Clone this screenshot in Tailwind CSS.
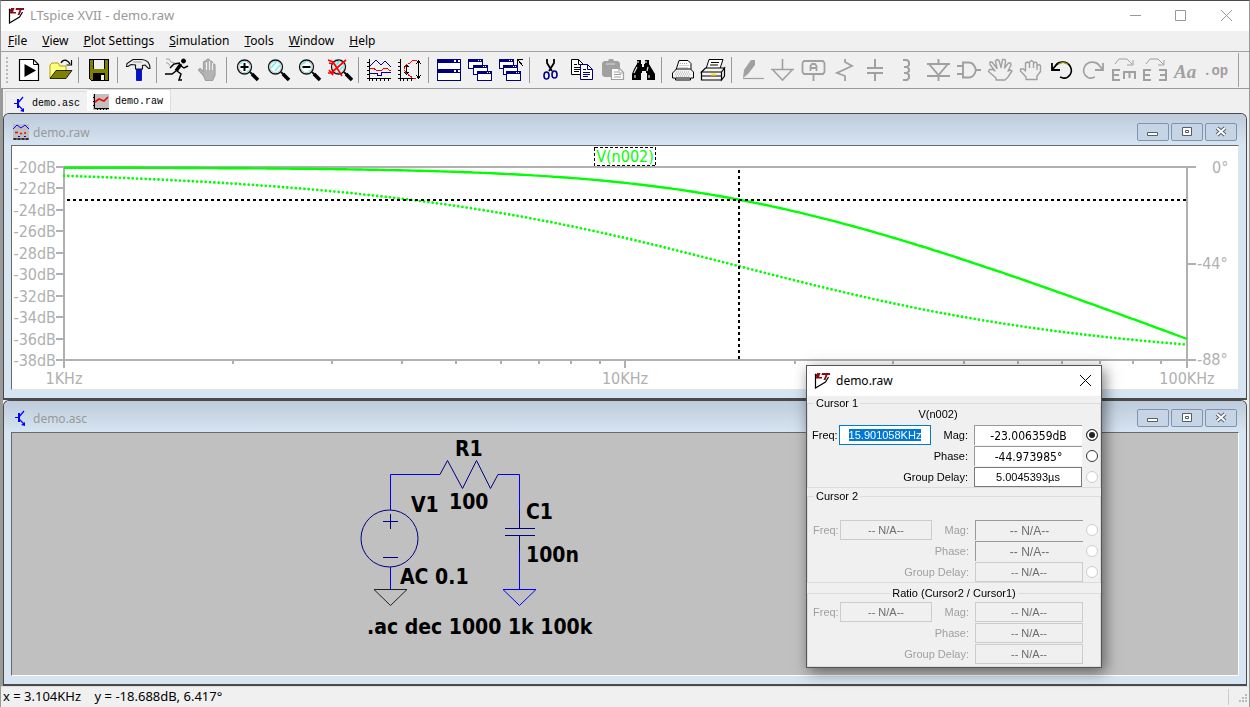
<!DOCTYPE html>
<html lang="en">
<head>
    <meta charset="UTF-8">
    <meta name="viewport" content="width=device-width, initial-scale=1.0">
    <title>LTspice XVII - demo.raw</title>
    <script src="https://cdn.jsdelivr.net/npm/@tailwindcss/browser@4"></script>
</head>
<body class="h-screen flex flex-col overflow-hidden bg-[#f0f0f0] border-l border-r border-[#999] border-t border-t-[#4a4a4a] font-['Noto_Sans',sans-serif] text-[12px] text-black">

    <!-- shared symbols -->
    <svg class="hidden">
        <symbol id="logo" viewBox="0 0 16 16">
            <path d="M1.500 1v14l10-6l3-5M1 1l4 3" fill="none" stroke="#000" stroke-width="1.200"/>
            <path d="M3 0h3.500L5 4h3v1.500H1.500L2 4zM8 0h8v2h-2.500L11.500 7H9.500l2-5H7.500z" fill="#8b0a14"/>
        </symbol>
        <symbol id="npn" viewBox="0 0 16 16">
            <path d="M2 7.500h3M6 7l5-6M6 9l5 5" fill="none" stroke="#00f" stroke-width="1.200"/>
            <path d="M5 3h2v9H5zM12 16v-4l-4 3z" fill="#00f"/>
        </symbol>
        <symbol id="wave" viewBox="0 0 16 16">
            <path d="M0 0h16v16H0z" fill="#c0c0c0"/>
            <path d="M0 5l4-4l4 3l4-3l4 4" fill="none" stroke="#00f"/>
            <path d="M2 8.500h3M7 9.500h2M11 9h2" stroke="#f00" stroke-width="1.500"/>
            <path d="M5 12.500h2M11 12.500h2" stroke="#00f"/>
            <path d="M0 15h16M2 14v2M6 14v2M10 14v2M14 14v2" stroke="#000"/>
        </symbol>
        <symbol id="lens" viewBox="0 0 27 24">
            <circle cx="11.500" cy="9" r="7" fill="#f8ffff" stroke="#111" stroke-width="1.300"/>
            <circle cx="11.500" cy="9" r="5.600" fill="none" stroke="#a8b8b8" stroke-width=".8"/>
            <path d="M17 14l3 3" stroke="#111" stroke-width="2"/>
            <path d="M19 16l6 6" stroke="#000" stroke-width="3.600"/>
        </symbol>
        <symbol id="turn" viewBox="0 0 27 24">
            <path d="M8 7C11 3 19 3 22 8C26 15 20 21 15 20L12 19" fill="none" stroke="currentColor" stroke-width="1.600"/>
            <path d="M4 5v7h8M4 12l5-6" fill="none" stroke="currentColor" stroke-width="1.800"/>
        </symbol>
        <symbol id="sheet" viewBox="0 0 13 16">
            <path d="M.5.5h7l5 5v10H.5z" fill="#fff" stroke="currentColor"/>
            <path d="M7.500.5v5h5M3 5.500h3M3 8.500h7M3 10.500h7M3 12.500h5" fill="none" stroke="currentColor"/>
        </symbol>
        <symbol id="win" viewBox="0 0 15 10">
            <path d="M.5.5h14v9H.5z" fill="#fff" stroke="#000080"/>
            <path d="M0 0h15v3H0z" fill="#000080"/>
            <path d="M10 1h1v1h-1zM12 1h1v1h-1z" fill="#fff"/>
        </symbol>
    </svg>

    <header class="h-[30px] shrink-0 flex items-center bg-white pl-[7px] pb-px">
        <svg class="w-4 h-4 mr-1.5"><use href="#logo"/></svg>
        <h1 class="text-[#999] text-[13px] grow">LTspice XVII - demo.raw</h1>
        <button aria-label="Minimize" class="w-[46px] flex justify-center"><svg class="w-[11px] h-[11px]" stroke="#999"><path d="M0 5.500h11"/></svg></button>
        <button aria-label="Maximize" class="w-[45px] flex justify-center"><svg class="w-[11px] h-[11px]" stroke="#999" fill="none"><path d="M.5.5h10v10H.5z"/></svg></button>
        <button aria-label="Close" class="w-[46px] flex justify-center"><svg class="w-[11px] h-[11px]" stroke="#999"><path d="M0 0l11 11M11 0L0 11"/></svg></button>
    </header>

    <nav class="h-[21px] shrink-0 flex items-center gap-[15px] pl-[7px] border-b border-[#a0a0a0] leading-[20px]">
        <button><u>F</u>ile</button>
        <button><u>V</u>iew</button>
        <button><u>P</u>lot Settings</button>
        <button><u>S</u>imulation</button>
        <button><u>T</u>ools</button>
        <button><u>W</u>indow</button>
        <button><u>H</u>elp</button>
    </nav>

    <div class="h-[37px] shrink-0 flex items-center pl-[5px] border-b border-[#999] [&>button]:w-[31px] [&>button]:shrink-0 [&>button]:flex [&>button]:justify-center [&>button]:text-[#a0a0a0] [&_button>svg]:w-[27px] [&_button>svg]:h-6 [&>hr]:w-px [&>hr]:h-[26px] [&>hr]:mx-[3px] [&>hr]:border-0 [&>hr]:bg-[#999] [&>hr]:mr-1 [&>hr]:shrink-0">
        <span class="h-[26px] w-[7px] border-l-2 border-dotted border-[#bbb] shrink-0"></span>
        <button aria-label="New schematic"><svg viewBox="0 0 27 24"><path d="M4.500 1.500h14l5 5v16h-19z" fill="#fff" stroke="#000" stroke-width="1.200"/><path d="M18.500 1.500v5h5" fill="none" stroke="#000"/><path d="M9.500 6v13L21 12.500z" fill="#000"/></svg></button>
        <button aria-label="Open"><svg viewBox="0 0 27 24"><path d="M4 20V7l2-2h6l2 3h6v5" fill="#ffff80" stroke="#b0a000"/><path d="M4 20.500L10 12.500h16L20 20.500z" fill="#808000" stroke="#000" stroke-width=".8"/><path d="M15 5c2-4 6-4 9 1M25.500 2v5h-5" fill="none" stroke="#000" stroke-width="1.200"/></svg></button>
        <hr>
        <button aria-label="Save"><svg viewBox="0 0 27 24" shape-rendering="crispEdges"><path d="M4 1h20v22H6l-2-2z" fill="#000"/><path d="M5 2h3v11h12V2h3v20h-3v-7H8v7H6l-1-1z" fill="#808000"/><path d="M9 2h10v9H9zM16 17h3v5h-3z" fill="#f0f0f0"/><path d="M8 11h12v3H8z" fill="#808000"/></svg></button>
        <hr>
        <button aria-label="Control panel"><svg viewBox="0 0 27 24"><path d="M12.500 10h5v12.500h-5z" fill="#0010e0" stroke="#000080" stroke-width=".8"/><path d="M2.500 8.500L3 5.500L9 1.500H18C23 2 26 5 26 10.500H24.500L21 7L18.500 7.500V11H11.500V7L7 6.500L4 8.500z" fill="#ececec" stroke="#111" stroke-width="1.100"/><path d="M9 4h9" stroke="#b8b8b8" stroke-width="1.500"/></svg></button>
        <hr>
        <button aria-label="Run"><svg viewBox="0 0 27 24" fill="none" stroke="#000"><circle cx="20.500" cy="3" r="2" fill="#000"/><path d="M18 6l-5 7" stroke-width="3.500"/><path d="M17 5l-6 1l-4 4M18 8l3 2l4-2M13 13l-4 3H2M14 13l4 3l-2 6h3" stroke-width="1.500"/><path d="M3 1h3l2 3l4 1M3 5h2l2 3" stroke="#a0a0a0"/></svg></button>
        <button aria-label="Halt"><svg viewBox="0 0 27 24"><path d="M9.500 17.500L4.500 12l1.500-1.500l3.500 3V4l1.500-1l1.500 1V2l1.500-1l1.500 1v1h1.500l1.500 1v2h1.500l1 1v10l-2.500 5.500h-7z" fill="#b4b4b4" stroke="currentColor" stroke-width="1.200"/><path d="M12.500 4v8M15.500 3v9M18.500 5v7" stroke="#f0f0f0"/></svg></button>
        <hr>
        <button aria-label="Zoom in"><svg viewBox="0 0 27 24"><use href="#lens"/><path d="M7 6l2-2M14 14l2-2" stroke="#6ef0f0" stroke-width="1.600"/><path d="M11.500 5v8M7.500 9h8" stroke="#000" stroke-width="2"/></svg></button>
        <button aria-label="Pan"><svg viewBox="0 0 27 24"><use href="#lens"/><path d="M7 10l5-6M11 13l5-6" stroke="#6ef0f0" stroke-width="1.600"/></svg></button>
        <button aria-label="Zoom out"><svg viewBox="0 0 27 24"><use href="#lens"/><path d="M7 6l4-2M14 14l2-2" stroke="#6ef0f0" stroke-width="1.600"/><path d="M7.500 9h8" stroke="#000" stroke-width="2"/></svg></button>
        <button aria-label="Zoom full extents"><svg viewBox="0 0 27 24"><use href="#lens" x="1"/><path d="M9 8l5-5M13 13l4-5" stroke="#6ef0f0" stroke-width="2"/><path d="M2 2l5 2l9 14M20 2L5 15M3 5l4 1M2 15h6M3 12l4 5" stroke="#f00" stroke-width="1.700" fill="none"/></svg></button>
        <hr>
        <button aria-label="Autorange"><svg viewBox="0 0 27 24" fill="none" shape-rendering="crispEdges"><path d="M4.500 1v22M2 20.500h24M2 4.500h2M2 8.500h2M2 12.500h2M2 16.500h2M7.500 20v3M11.500 20v3M15.500 20v3M19.500 20v3M23.500 20v3" stroke="#000"/><path d="M5 8l6-6l5 5l4-4l6 6" stroke="#000080"/><path d="M5 10h3l3 2h6l2-2h3l2 2h2" stroke="#f00"/><path d="M5 15.500h7v2h4v-3h10" stroke="#0000a0"/></svg></button>
        <button aria-label="FFT"><svg viewBox="0 0 27 24" fill="none" shape-rendering="crispEdges"><path d="M4.500 1v22M2 20.500h16M2 4.500h2M2 8.500h2M2 12.500h2M2 16.500h2M7.500 20v3M11.500 20v3M15.500 20v3M10.500 7v9M8.500 9l2-2l2 2M8.500 14l2 2l2-2M22.500 3v17M20 6l2.500-3l2.500 3M20 17l2.500 3l2.500-3" stroke="#000"/><path d="M21 2h-4l-3 3l-4 2l-2 4l2 4l4 3l3 2h3" stroke="#f00" stroke-dasharray="5 1"/></svg></button>
        <hr>
        <button aria-label="Tile windows"><svg viewBox="0 0 27 24" shape-rendering="crispEdges"><path d="M2.500 1.500h23v10h-23zM2.500 11.500h23v11h-23z" fill="#fff" stroke="#000080"/><path d="M2 1h24v4H2zM2 11h24v4H2z" fill="#000080"/><path d="M19 2h2v2h-2zM23 2h2v2h-2zM19 12h2v2h-2zM23 12h2v2h-2z" fill="#fff"/></svg></button>
        <button aria-label="Cascade windows"><svg viewBox="0 0 27 24" shape-rendering="crispEdges"><use href="#win" x="2" y="1" width="15" height="10"/><use href="#win" x="7" y="7" width="15" height="10"/><use href="#win" x="11" y="13" width="15" height="10"/></svg></button>
        <button aria-label="Close all"><svg viewBox="0 0 27 24" shape-rendering="crispEdges"><use href="#win" x="2" y="1" width="15" height="10"/><use href="#win" x="6" y="7" width="15" height="10"/><use href="#win" x="9" y="13" width="15" height="10"/><path d="M18 0h9v10h-6V6h-3z" fill="#f0f0f0"/><path d="M20.500 7V1.500h5M21 2l5 6" fill="none" stroke="#000"/></svg></button>
        <hr>
        <button aria-label="Cut"><svg viewBox="0 0 27 24" fill="none"><path d="M11 1v4l5 8M18 1v4l-5 8" stroke="#000" stroke-width="1.800"/><ellipse cx="10.500" cy="17.500" rx="2.500" ry="3.500" stroke="#000090" stroke-width="1.600"/><ellipse cx="18.500" cy="16.500" rx="2.500" ry="3.500" stroke="#000090" stroke-width="1.600"/></svg></button>
        <button aria-label="Copy"><svg viewBox="0 0 27 24"><use href="#sheet" class="text-black" x="4" y="1" width="13" height="16"/><use href="#sheet" class="text-[#000080]" x="13" y="6" width="13" height="16"/></svg></button>
        <button aria-label="Paste"><svg viewBox="0 0 27 24"><path d="M4 5l2-2h4l1-2h4l1 2h4l2 2v14H6l-2-2z" fill="currentColor"/><path d="M8 6h9" stroke="#ddd"/><path d="M13.500 10.500h8l4 4v7h-12z" fill="#fff" stroke="currentColor" stroke-width="1.200"/><path d="M16 14h4M16 16.500h7M16 19h7M21 11v4h4" stroke="currentColor" fill="none"/></svg></button>
        <button aria-label="Find"><svg viewBox="0 0 27 24" fill="#000"><path d="M8 2h4v4h1v3h2V6h1V2h4v4l3 5l3 5v6h-8v-7h-1v-2h-4v2h-1v7H3v-6l2-5l3-5z"/><path d="M8 9l-3 6M19 9l-1 4M6 17v3M20 17v3M9 3v2M17 3v2" stroke="#ddd" stroke-width="1.200"/></svg></button>
        <hr>
        <button aria-label="Print"><svg viewBox="0 0 27 24"><path d="M8 12L11 2.500h9l3 3v6" fill="#fff" stroke="#000"/><path d="M4.500 15l4-4h14l3 3v6h-3v2h-15v-2h-3z" fill="#f4f4f4" stroke="#000"/><path d="M12 5.500h8M11.500 7.500h9M10.500 9.500h10M8 14h14M7 16h15M8 18h14" stroke="#aaa" stroke-dasharray="1 1"/><path d="M8 20h14" stroke="#000"/></svg></button>
        <button aria-label="Print setup"><svg viewBox="0 0 27 24"><path d="M7 11L10 1.500h14l-3 9" fill="#fff" stroke="#000"/><path d="M2.500 14l4-4h19l-3 4zM2.500 14h20v8h-20zM22.500 14l3-4v8l-3 4z" fill="#f4f4f4" stroke="#000" stroke-width="1.200"/><path d="M12 4.500h8M11 7h8M3 18h19" stroke="#000"/><path d="M12 16.500h5" stroke="#ffe000" stroke-width="2"/></svg></button>
        <hr>
        <button aria-label="Draw wire"><svg viewBox="0 0 27 24"><path d="M5 20l1-8l7-10h4v5l-7 9z" fill="currentColor"/><path d="M5 20.500h21" stroke="currentColor" stroke-width="1.200"/></svg></button>
        <button aria-label="Ground"><svg viewBox="0 0 27 24" fill="none" stroke="currentColor" stroke-width="1.600"><path d="M13.500 1v10M2 11.500h23M4 12l9.500 10L23 12"/></svg></button>
        <button aria-label="Label net"><svg viewBox="0 0 27 24" fill="none" stroke="currentColor" stroke-width="1.800"><path d="M4 3h19l1.500 2v9L23 16H4l-1.500-2V5zM13.500 16v7M10.500 13V8l1.500-2h3l1.500 2v5M10.500 10h6"/></svg></button>
        <button aria-label="Resistor"><svg viewBox="0 0 27 24" fill="none" stroke="currentColor" stroke-width="1.800"><path d="M14 1v3l7 4L6 15l8 3v5"/></svg></button>
        <button aria-label="Capacitor"><svg viewBox="0 0 27 24" stroke="currentColor" stroke-width="2" fill="none"><path d="M5 10h16M5 15h16M13 1v9M13 15v8"/></svg></button>
        <button aria-label="Inductor"><svg viewBox="0 0 27 24" fill="none" stroke="currentColor" stroke-width="2"><path d="M10 2h4l2 2v3l-2 2h-3M14 9l2 2v2l-2 2h-3M14 15l2 2v3l-2 2h-4"/></svg></button>
        <button aria-label="Diode"><svg viewBox="0 0 27 24" fill="none" stroke="currentColor" stroke-width="1.900"><path d="M3 6h23M3 18h23M14.500 1v5M14.500 18v5M5 6l9.500 11L24 6"/></svg></button>
        <button aria-label="Component"><svg viewBox="0 0 27 24" fill="none" stroke="currentColor" stroke-width="1.900"><path d="M2 8h6M2 16h6M8 4.500h6q5 0 7 7.500q-2 7.500-7 7.500H8zM21 12h5"/></svg></button>
        <button aria-label="Move"><svg viewBox="0 0 27 24" fill="none" stroke="currentColor" stroke-width="1.400" stroke-linejoin="round"><path d="M10 22v-2L2.500 13.500l1-2h3l2.500 1.500L4 6.500V4h2l5 6.500L9.500 3l1.500-1.500l2 1l2 7l1.500-8h2.500l.5 2L18.500 10l4-5h2l.5 2l-3 6l2-1l2 1l-4 6l-3 3z"/></svg></button>
        <button aria-label="Drag"><svg viewBox="0 0 27 24" fill="none" stroke="currentColor" stroke-width="1.400" stroke-linejoin="round"><path d="M9 21.500V19L3.500 13v-2h3l2 2V5l2-1l2 1.500V4l2-1.500l2 1.500v1.500l2-1.500l1.500 1v3l2-1.500l1.500 1v6L20 18v3.500zM12.500 6v4M16.500 6v4M20 8v4"/></svg></button>
        <button aria-label="Undo"><svg viewBox="0 0 27 24" class="text-black"><use href="#turn"/><path d="M10 6.500q5-4 10 0" stroke="#a0a000" stroke-width="1.200" fill="none"/></svg></button>
        <button aria-label="Redo"><svg viewBox="0 0 27 24"><use href="#turn" transform="translate(28 0) scale(-1 1)"/></svg></button>
        <button aria-label="Rotate"><svg viewBox="0 0 27 24" fill="none" stroke="currentColor" stroke-width="2"><path d="M10 12H3v10h7M3 17h6M13 14h13M14 14v7M19.500 14v6M25 14v7"/><path d="M5 6l4-5h8l5 5M23 2v5h-6" stroke-width="1"/></svg></button>
        <button aria-label="Mirror"><svg viewBox="0 0 27 24" fill="none" stroke="currentColor" stroke-width="2"><path d="M10 12H3v10h7M3 17h6M18 12h7v10h-7M25 17h-6"/><path d="M5 6l4-5h8l5 5M23 2v5h-6" stroke-width="1"/></svg></button>
        <button aria-label="Text"><svg viewBox="0 0 27 24"><text x="2" y="20" fill="currentColor" class="font-['Liberation_Serif',serif] italic font-bold text-[19px]">Aa</text></svg></button>
        <button aria-label="SPICE directive"><svg viewBox="0 0 27 24"><text x="0" y="17" fill="currentColor" class="font-['Liberation_Mono',monospace] font-bold text-[14px]">.op</text></svg></button>
        <span class="w-px h-[34px] bg-[#a0a0a0] ml-1.5"></span>
    </div>

    <div class="h-6 shrink-0 flex items-start pl-0.5 border-l-2 border-[#999] font-['Liberation_Mono',monospace] text-[10px]">
        <button class="h-[22px] w-[82px] mt-0.5 pt-0.5 flex items-center gap-1 pl-1.5 border-t border-l border-[#ddd]"><svg class="w-4 h-4"><use href="#npn"/></svg>demo.asc</button>
        <button class="h-[22px] w-[84px] pt-0.5 flex items-center gap-1.5 pl-1.5 bg-white border-r border-t border-[#ddd]"><svg class="w-4 h-4" viewBox="0 0 16 16"><path d="M0 0h16v16H0z" fill="#c0c0c0"/><path d="M1.500 0v14.500H16M0 3.500h2M0 7.500h2M0 11.500h2M4.500 14v2M7.500 14v2M10.500 14v2M13.500 14v2" stroke="#000" fill="none"/><path d="M2 8l4-3l5 2l4-4" fill="none" stroke="#f00" stroke-width="1.600"/></svg>demo.raw</button>
    </div>

    <main class="grow min-h-0 flex flex-col border-l-2 border-[#999] pr-0.5">
        <section class="flex-1 min-h-0 flex flex-col border border-b-2 border-[#4a4a4a] rounded-t-md bg-[#d7e4f2] px-[7px] pb-2">
            <div class="h-[31px] shrink-0 -mx-[7px] px-[9px] rounded-t-md bg-linear-to-b from-[#bdcbda] to-[#d7e4f2] flex items-center pt-1">
                <svg class="w-4 h-4 mr-1"><use href="#wave"/></svg>
                <h2 class="text-[#999] grow pt-0.5">demo.raw</h2>
                <div class="flex gap-0.5 [&>button]:w-8 [&>button]:h-[18px] [&>button]:border [&>button]:border-[#8393ad] [&>button]:rounded-xs [&>button]:bg-[#c6d5e6] [&>button]:flex [&>button]:items-center [&>button]:justify-center">
                    <button aria-label="Minimize"><svg class="w-3 h-3" fill="#fff" stroke="#555d6b"><path d="M.5 6.500h10v3h-10z"/></svg></button>
                    <button aria-label="Maximize"><svg class="w-3 h-3" fill="#fff" stroke="#555d6b"><path d="M1.500 1.500h9v8h-9zM4.500 4.500h3v2h-3z"/></svg></button>
                    <button aria-label="Close"><svg class="w-3 h-3"><path d="M2 2l8 7M10 2l-8 7" stroke="#555d6b" stroke-width="4"/><path d="M2 2l8 7M10 2l-8 7" stroke="#fff" stroke-width="2"/></svg></button>
                </div>
            </div>
            <div class="grow min-h-0 bg-white border border-[#696969] border-b-[#e3e3e3] border-r-[#e3e3e3]">
                <svg id="plot" class="w-full h-full font-['DejaVu_Sans_Condensed','DejaVu_Sans',sans-serif] text-[16px]" viewBox="12 146 1226 242" preserveAspectRatio="xMinYMin" fill="none">
                    <g id="axes" stroke="#b0b0b0" stroke-width="2" shape-rendering="crispEdges">
                        <path d="M56 167H1196M56 360H1196M64 167V368M1187 167V368M625 360V368M1187 264H1196"/>
                    </g>
                    <g id="labels" fill="#b0b0b0">
                        <text x="1212" y="173">0°</text>
                        <text x="1197" y="269">-44°</text>
                        <text x="1197" y="365">-88°</text>
                        <text x="64" y="384" text-anchor="middle">1KHz</text>
                        <text x="625" y="384" text-anchor="middle">10KHz</text>
                        <text x="1187" y="384" text-anchor="middle">100KHz</text>
                    </g>
                    <path id="magnitude" stroke="#0f0" stroke-width="2.400"/>
                    <path id="phase" stroke="#0f0" stroke-width="2.800" stroke-linecap="round" stroke-dasharray="0 4.300"/>
                    <path d="M67 200H1187M739 170V359" stroke="#000" stroke-width="2" stroke-dasharray="3 3" shape-rendering="crispEdges"/>
                    <rect x="594.5" y="147.5" width="61" height="18" stroke="#000" stroke-dasharray="3 2" shape-rendering="crispEdges"/>
                    <text x="625" y="162" text-anchor="middle" fill="#0f0">V(n002)</text>
                </svg>
            </div>
        </section>

        <section class="flex-1 min-h-0 flex flex-col border border-b-2 border-[#4a4a4a] rounded-t-md bg-[#d7e4f2] px-[7px] pb-2">
            <div class="h-[31px] shrink-0 -mx-[7px] px-[9px] rounded-t-md bg-linear-to-b from-[#bdcbda] to-[#d7e4f2] flex items-center pt-1">
                <svg class="w-4 h-4 mr-1"><use href="#npn"/></svg>
                <h2 class="text-[#999] grow pt-0.5">demo.asc</h2>
                <div class="flex gap-0.5 [&>button]:w-8 [&>button]:h-[18px] [&>button]:border [&>button]:border-[#8393ad] [&>button]:rounded-xs [&>button]:bg-[#c6d5e6] [&>button]:flex [&>button]:items-center [&>button]:justify-center">
                    <button aria-label="Minimize"><svg class="w-3 h-3" fill="#fff" stroke="#555d6b"><path d="M.5 6.500h10v3h-10z"/></svg></button>
                    <button aria-label="Maximize"><svg class="w-3 h-3" fill="#fff" stroke="#555d6b"><path d="M1.500 1.500h9v8h-9zM4.500 4.500h3v2h-3z"/></svg></button>
                    <button aria-label="Close"><svg class="w-3 h-3"><path d="M2 2l8 7M10 2l-8 7" stroke="#555d6b" stroke-width="4"/><path d="M2 2l8 7M10 2l-8 7" stroke="#fff" stroke-width="2"/></svg></button>
                </div>
            </div>
            <div class="grow min-h-0 bg-[#c0c0c0] border border-[#696969] border-b-white border-r-white">
                <svg class="w-full h-full font-['DejaVu_Sans_Condensed','DejaVu_Sans',sans-serif] font-bold text-[21px]" viewBox="12 433 1226 242" preserveAspectRatio="xMinYMin" fill="none">
                    <path d="M390.500 510V474.500H440M498 474.500H519.500V510M390.500 567V589M519.500 550V589M503 589.500H536L519.500 605.500Z" stroke="#00f"/>
                    <path d="M440 474.500L447.500 460.500L462.500 488.500L476.500 460.500L490.500 488.500L498 474.500M519.500 510V528M505 528.500H535M505 535.500H535M519.500 536V551M383 521.500H398M390.500 514V529M383 557.500H398" stroke="#000080"/>
                    <circle cx="389.500" cy="538.500" r="28.500" stroke="#000080"/>
                    <path d="M374 589.500H407L390.500 605.500Z" stroke="#222"/>
                    <g fill="#000">
                        <text x="455" y="456">R1</text>
                        <text x="411" y="512">V1</text>
                        <text x="449" y="509">100</text>
                        <text x="526" y="519">C1</text>
                        <text x="526" y="562">100n</text>
                        <text x="400" y="584">AC 0.1</text>
                        <text x="367" y="634">.ac dec 1000 1k 100k</text>
                    </g>
                </svg>
            </div>
        </section>
    </main>

    <footer class="h-[21px] shrink-0 flex items-center pl-0.5 pr-0.5 border-t border-[#ddd] text-[13px]">
        <p class="grow whitespace-pre">x = 3.104KHz    y = -18.688dB, 6.417°</p>
        <span class="w-px h-4 bg-[#ccc] mr-[9px]"></span>
        <svg class="w-[9px] h-[9px]" fill="#bbb"><path d="M7 1h2v2H7zM4 4h2v2H4zM7 4h2v2H7zM1 7h2v2H1zM4 7h2v2H4zM7 7h2v2H7z"/></svg>
    </footer>

    <!-- cursor readout, floats over both child windows -->
    <form class="fixed right-[148px] top-[365px] w-[296px] bg-[#f0f0f0] border border-[#555] shadow-[3px_4px_14px_rgba(0,0,0,0.5)] font-['Liberation_Sans',sans-serif] text-[11px] leading-[14px]">
        <div class="h-[30px] flex items-center bg-white pl-[7px] pr-2.5 pb-px font-['Noto_Sans',sans-serif] text-[12px]">
            <svg class="w-4 h-4 mr-1.5"><use href="#logo"/></svg>
            <h2 class="grow pt-px">demo.raw</h2>
            <button type="button" aria-label="Close"><svg class="w-[11px] h-[11px]" stroke="#000"><path d="M0 0l11 11M11 0L0 11"/></svg></button>
        </div>
        <fieldset class="border border-[#dcdcdc]">
            <legend class="ml-1.5 px-0.5">Cursor 1</legend>
            <p class="h-[15px] leading-[8px] text-center pr-8">V(n002)</p>
            <div class="flex flex-col gap-px">
                <div class="flex items-center h-5 pl-1 pr-0.5">
                    <label for="f1" class="w-[27px]">Freq:</label>
                    <input id="f1" value="15.901058KHz" class="w-[92px] h-5 bg-white border border-[#0078d7] text-center outline-none selection:bg-[#0078d7] selection:text-white">
                    <label for="m1" class="grow text-right pr-1.5">Mag:</label>
                    <input id="m1" value="-23.006359dB" class="w-[108px] h-5 bg-white border-t border-l border-[#999] text-center font-['DejaVu_Sans_Condensed','DejaVu_Sans',sans-serif] text-[12px]">
                    <input type="radio" name="c1" aria-label="Mag" checked class="appearance-none w-3 h-3 ml-1 rounded-full border border-[#333] bg-white checked:bg-[#222] checked:shadow-[inset_0_0_0_2px_white]">
                </div>
                <div class="flex items-center h-5 pl-1 pr-0.5">
                    <label for="p1" class="grow text-right pr-1.5">Phase:</label>
                    <input id="p1" value="-44.973985°" class="w-[108px] h-5 bg-white border-t border-l border-[#999] text-center font-['DejaVu_Sans_Condensed','DejaVu_Sans',sans-serif] text-[12px]">
                    <input type="radio" name="c1" aria-label="Phase" class="appearance-none w-3 h-3 ml-1 rounded-full border border-[#333] bg-white">
                </div>
                <div class="flex items-center h-5 pl-1 pr-0.5">
                    <label for="g1" class="grow text-right pr-1.5">Group Delay:</label>
                    <input id="g1" value="5.0045393µs" class="w-[108px] h-5 bg-white border border-[#7a7a7a] text-center">
                    <input type="radio" name="c1" aria-label="Group Delay" disabled class="appearance-none w-3 h-3 ml-1 rounded-full border border-[#ccc] bg-white">
                </div>
            </div>
        </fieldset>
        <fieldset disabled class="mt-px border border-[#dcdcdc] text-[#a0a0a0]">
            <legend class="ml-1.5 px-0.5 text-black">Cursor 2</legend>
            <div class="flex flex-col gap-px pt-[17px]">
                <div class="flex items-center h-5 pl-[5px] pr-0.5">
                    <label for="f2" class="w-[27px]">Freq:</label>
                    <input id="f2" value="-- N/A--" class="w-[92px] h-5 border border-[#ccc] text-center text-[#6d6d6d]">
                    <label for="m2" class="grow text-right pr-1.5">Mag:</label>
                    <input id="m2" value="-- N/A--" class="w-[108px] h-5 border-t border-l border-[#999] text-center text-[#6d6d6d] text-[12px]">
                    <input type="radio" name="c2" aria-label="Mag" class="appearance-none w-3 h-3 ml-[3px] rounded-full border border-[#ccc] bg-white">
                </div>
                <div class="flex items-center h-5 pl-[5px] pr-0.5">
                    <label for="p2" class="grow text-right pr-1.5">Phase:</label>
                    <input id="p2" value="-- N/A--" class="w-[108px] h-5 border-t border-l border-[#999] text-center text-[#6d6d6d] text-[12px]">
                    <input type="radio" name="c2" aria-label="Phase" class="appearance-none w-3 h-3 ml-[3px] rounded-full border border-[#ccc] bg-white">
                </div>
                <div class="flex items-center h-5 pl-[5px] pr-0.5">
                    <label for="g2" class="grow text-right pr-1.5">Group Delay:</label>
                    <input id="g2" value="-- N/A--" class="w-[108px] h-5 border border-[#ccc] text-center text-[#6d6d6d]">
                    <input type="radio" name="c2" aria-label="Group Delay" class="appearance-none w-3 h-3 ml-[3px] rounded-full border border-[#ccc] bg-white">
                </div>
            </div>
        </fieldset>
        <fieldset disabled class="mt-[3px] pb-0.5 border border-[#dcdcdc] text-[#a0a0a0]">
            <legend class="mx-auto px-0.5 text-black">Ratio (Cursor2 / Cursor1)</legend>
            <div class="flex flex-col gap-px pt-0.5 pr-[15px]">
                <div class="flex items-center h-5 pl-[5px] pr-0.5">
                    <label for="f3" class="w-[27px]">Freq:</label>
                    <input id="f3" value="-- N/A--" class="w-[92px] h-5 border border-[#ccc] text-center text-[#6d6d6d]">
                    <label for="m3" class="grow text-right pr-1.5">Mag:</label>
                    <input id="m3" value="-- N/A--" class="w-[108px] h-5 border border-[#ccc] text-center text-[#6d6d6d]">
                </div>
                <div class="flex items-center h-5 pl-[5px] pr-0.5">
                    <label for="p3" class="grow text-right pr-1.5">Phase:</label>
                    <input id="p3" value="-- N/A--" class="w-[108px] h-5 border border-[#ccc] text-center text-[#6d6d6d]">
                </div>
                <div class="flex items-center h-5 pl-[5px] pr-0.5">
                    <label for="g3" class="grow text-right pr-1.5">Group Delay:</label>
                    <input id="g3" value="-- N/A--" class="w-[108px] h-5 border border-[#ccc] text-center text-[#6d6d6d]">
                </div>
            </div>
        </fieldset>
    </form>

    <script>
        const NS = 'http://www.w3.org/2000/svg';
        const FC = 1 / (2 * Math.PI * 100 * 100e-9);
        const xOf = f => 64 + 561.5 * Math.log10(f / 1000);

        // RC low-pass response, 1kHz to 100kHz
        let mag = '';
        let phase = '';
        for (let i = 0; i <= 280; i++) {
            const f = 1000 * Math.pow(10, i / 140);
            const x = xOf(f).toFixed(1);
            const db = -10 * Math.log10(1 + (f / FC) ** 2);
            const deg = Math.atan(f / FC) * 180 / Math.PI;
            mag += `${i ? 'L' : 'M'}${x} ${(167.5 - db * 192 / 18).toFixed(1)}`;
            phase += `${i ? 'L' : 'M'}${x} ${(168 + deg * 192 / 88).toFixed(1)}`;
        }
        document.getElementById('magnitude').setAttribute('d', mag);
        document.getElementById('phase').setAttribute('d', phase);

        // ticks
        let d = '';
        for (let i = 0; i < 10; i++) {
            const y = Math.round(167 + i * 193 / 9);
            d += `M56 ${y}H64`;
            const t = document.createElementNS(NS, 'text');
            t.setAttribute('x', 56);
            t.setAttribute('y', y + 6);
            t.setAttribute('text-anchor', 'end');
            t.textContent = `${-20 - 2 * i}dB`;
            document.getElementById('labels').appendChild(t);
        }
        for (const decade of [1000, 10000]) {
            for (let n = 2; n < 10; n++) {
                d += `M${Math.round(xOf(n * decade))} 360V364`;
            }
        }
        const ticks = document.createElementNS(NS, 'path');
        ticks.setAttribute('d', d);
        document.getElementById('axes').appendChild(ticks);

        document.getElementById('f1').select();
    </script>
</body>
</html>
